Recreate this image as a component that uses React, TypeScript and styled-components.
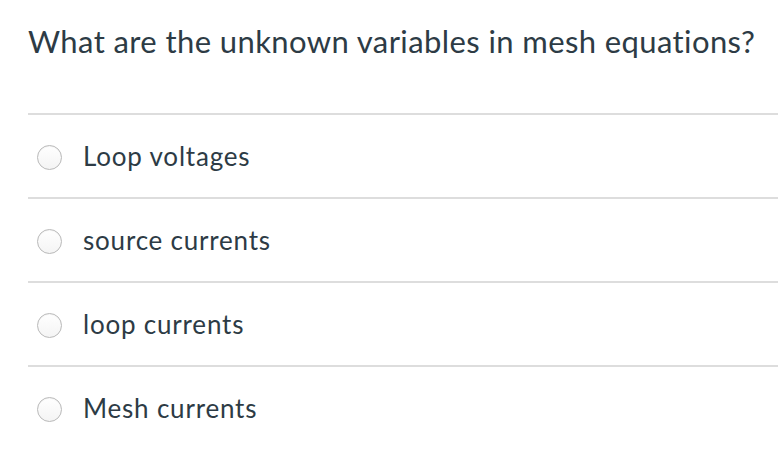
import styled, { createGlobalStyle } from 'styled-components';

const GlobalStyle = createGlobalStyle`
  body { margin: 0; background: #fff; font-family: Lato, "Helvetica Neue", Arial, sans-serif; color: #2d3b45; }
`;

const Page = styled.div`padding-left: 28px;`;
const Question = styled.h1`
  margin: 0; padding: 23px 0 54px; font-size: 31px; font-weight: 400; line-height: 36px;
  letter-spacing: 0.4px; color: #2d3b45;
`;
const Answers = styled.div`display: flex; flex-direction: column;`;
const Answer = styled.label`
  display: flex; align-items: center; gap: 21px; height: 82px;
  border-top: 2px solid #dddddd; padding-left: 9px;
  font-size: 26px; line-height: 30px; letter-spacing: 0.8px; cursor: pointer;
`;
const Radio = styled.span`
  width: 23px; height: 23px; border-radius: 50%; flex: none; margin-top: 2px;
  border: 1px solid #b9b9b9;
  background: linear-gradient(#ffffff, #f4f4f4);
  box-shadow: inset 0 1px 1px rgba(0, 0, 0, 0.04);
`;

const options = ['Loop voltages', 'source currents', 'loop currents', 'Mesh currents'];

export default function App() {
  return (
    <Page>
      <GlobalStyle />
      <Question>What are the unknown variables in mesh equations?</Question>
      <Answers>
        {options.map((o) => (
          <Answer key={o}><Radio />{o}</Answer>
        ))}
      </Answers>
    </Page>
  );
}
